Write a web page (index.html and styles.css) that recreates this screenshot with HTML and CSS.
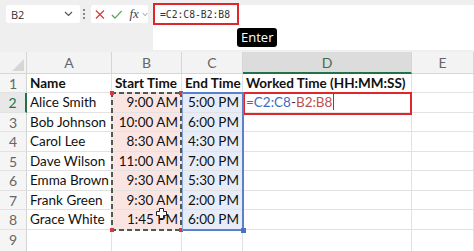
FILE: index.html
```html
<!DOCTYPE html>
<html>

<head>
    <meta charset="UTF-8">
    <title>Worked Time</title>
    <link rel="stylesheet" href="styles.css">
</head>

<body>
    <div class="topbar">
        <div class="namebox">
            <span>B2</span>
            <svg class="chev" width="9" height="6" viewBox="0 0 9 6"><polyline points="1,1 4.5,4.5 8,1" fill="none" stroke="#555" stroke-width="1.2"/></svg>
        </div>
        <div class="dots"><i></i><i></i><i></i></div>
        <div class="fxbox">
            <svg width="11" height="11" viewBox="0 0 11 11"><path d="M1 1 L10 10 M10 1 L1 10" stroke="#d13b3b" stroke-width="1.3" fill="none"/></svg>
            <svg width="13" height="11" viewBox="0 0 13 11"><polyline points="1,6 4.5,9.5 12,1.5" fill="none" stroke="#5aa55a" stroke-width="1.4"/></svg>
            <span class="fx">fx</span>
            <svg class="chev-s" width="7" height="5" viewBox="0 0 7 5"><polyline points="1,1 3.5,3.8 6,1" fill="none" stroke="#888" stroke-width="1"/></svg>
        </div>
        <div class="formula">
            <div class="formula-text">=C2:C8-B2:B8</div>
            <div class="tip">Enter</div>
        </div>
    </div>

    <div class="sheet">
        <div class="grid">
            <div class="corner"><svg width="12" height="12" viewBox="0 0 12 12"><polygon points="12,0 12,12 0,12" fill="#d6d6d6"/></svg></div>
            <div class="hd">A</div>
            <div class="hd">B</div>
            <div class="hd">C</div>
            <div class="hd sel">D</div>
            <div class="hd">E</div>

            <div class="rn">1</div>
            <div class="c bold">Name</div>
            <div class="c bold">Start Time</div>
            <div class="c bold">End Time</div>
            <div class="c bold">Worked Time (HH:MM:SS)</div>
            <div class="c"></div>

            <div class="rn sel">2</div>
            <div class="c">Alice Smith</div>
            <div class="c num pink">9:00 AM</div>
            <div class="c num blue">5:00 PM</div>
            <div class="c edit-text"><span class="ref-c">=C2:C8</span>-<span class="ref-b">B2:B8</span><span class="caret"></span></div>
            <div class="c"></div>

            <div class="rn">3</div>
            <div class="c">Bob Johnson</div>
            <div class="c num pink">10:00 AM</div>
            <div class="c num blue">6:00 PM</div>
            <div class="c"></div>
            <div class="c"></div>

            <div class="rn">4</div>
            <div class="c">Carol Lee</div>
            <div class="c num pink">8:30 AM</div>
            <div class="c num blue">4:30 PM</div>
            <div class="c"></div>
            <div class="c"></div>

            <div class="rn">5</div>
            <div class="c">Dave Wilson</div>
            <div class="c num pink">11:00 AM</div>
            <div class="c num blue">7:00 PM</div>
            <div class="c"></div>
            <div class="c"></div>

            <div class="rn">6</div>
            <div class="c">Emma Brown</div>
            <div class="c num pink">9:30 AM</div>
            <div class="c num blue">5:30 PM</div>
            <div class="c"></div>
            <div class="c"></div>

            <div class="rn">7</div>
            <div class="c">Frank Green</div>
            <div class="c num pink">9:30 AM</div>
            <div class="c num blue">2:00 PM</div>
            <div class="c"></div>
            <div class="c"></div>

            <div class="rn">8</div>
            <div class="c">Grace White</div>
            <div class="c num pink">1:45 PM</div>
            <div class="c num blue">6:00 PM</div>
            <div class="c"></div>
            <div class="c"></div>

            <div class="rn">9</div>
            <div class="c"></div>
            <div class="c"></div>
            <div class="c"></div>
            <div class="c"></div>
            <div class="c"></div>
        </div>

        <div class="overlay">
            <div class="range-b">
                <i class="sq tl"></i><i class="sq tr"></i><i class="sq bl"></i><i class="sq br"></i>
            </div>
            <div class="range-c"><i class="handle"></i></div>
            <div class="edit-box"></div>
        </div>

        <svg class="cursor" width="11" height="11" viewBox="0 0 11 11">
            <path d="M3.5 0.5 H7.5 V3.5 H10.5 V7.5 H7.5 V10.5 H3.5 V7.5 H0.5 V3.5 H3.5 Z" fill="#fff" stroke="#222" stroke-width="1"/>
        </svg>
    </div>
</body>

</html>
```

FILE: styles.css
```css
body {
    margin: 0;
    width: 474px;
    height: 251px;
    overflow: hidden;
    background: #fff;
    font-family: Lato, "Open Sans", sans-serif;
}

/* formula bar */

.topbar {
    display: flex;
    align-items: flex-start;
    height: 52px;
    box-sizing: border-box;
    padding: 5px 0 0 6px;
    background: #efefef;
}

.namebox {
    display: flex;
    align-items: center;
    justify-content: space-between;
    width: 74px;
    height: 18px;
    box-sizing: border-box;
    padding: 0 7px 0 5px;
    background: #fff;
    border-radius: 2px;
    font-family: "Open Sans", sans-serif;
    font-size: 11px;
    color: #333;
}

.dots {
    display: flex;
    flex-direction: column;
    gap: 2px;
    width: 11px;
    padding: 4px 0 0 3px;
    box-sizing: border-box;
}

.dots i {
    width: 2px;
    height: 2px;
    background: #666;
    border-radius: 1px;
}

.fxbox {
    display: flex;
    align-items: center;
    gap: 6px;
    width: 57px;
    height: 18px;
    box-sizing: border-box;
    padding-left: 4px;
    background: #fff;
    border-radius: 2px;
}

.fx {
    font-family: "Liberation Serif", serif;
    font-style: italic;
    font-size: 13px;
    color: #444;
    margin-left: 1px;
}

.chev-s {
    margin-left: -3px;
}

.formula {
    position: relative;
    flex: 1;
    height: 45px;
    margin-left: 5px;
    background: #fff;
}

.formula-text {
    width: 86px;
    height: 22px;
    box-sizing: border-box;
    margin-top: -2px;
    padding: 4px 0 0 5px;
    border: 2px solid #e1262b;
    font-family: "DejaVu Sans Mono", monospace;
    font-size: 9.7px;
    color: #333;
}

.tip {
    position: absolute;
    left: 84px;
    top: 23px;
    padding: 1px 4px 2px;
    background: #000;
    border-radius: 3px;
    font-family: "Open Sans", sans-serif;
    font-size: 13px;
    line-height: 16px;
    color: #fff;
}

/* sheet */

.sheet {
    position: relative;
}

.grid,
.overlay {
    display: grid;
    grid-template-columns: 27px 85px 70px 61px 169px 1fr;
    grid-template-rows: 22px 19px repeat(7, 19.57px) 22px;
}

.overlay {
    position: absolute;
    inset: 0;
}

.grid > div {
    box-sizing: border-box;
    border-right: 1px solid #e2e2e2;
    border-bottom: 1px solid #e2e2e2;
}

.corner {
    display: flex;
    align-items: flex-end;
    justify-content: flex-end;
    padding: 0 2px 2px 0;
    background: #f3f3f3;
}

.grid > .corner,
.grid > .hd {
    border-color: #d6d6d6;
}

.hd {
    background: #f3f3f3;
    text-align: center;
    font-size: 14px;
    line-height: 21px;
    color: #666;
}

.hd.sel {
    background: #dcdcdc;
    color: #3f6e50;
    border-bottom: 2px solid #217346;
}

.rn {
    background: #f5f5f5;
    text-align: center;
    font-size: 14px;
    line-height: 19px;
    color: #666;
}

.grid > .rn {
    border-right-color: #d4d4d4;
}

.grid > .rn.sel {
    color: #217346;
    border-right: 2px solid #217346;
    background: #e8e8e8;
}

.c {
    padding: 0 3px;
    font-size: 13.5px;
    line-height: 19px;
    color: #111;
    white-space: nowrap;
    overflow: hidden;
}

.bold {
    font-weight: bold;
}

.num {
    text-align: right;
}

.pink {
    background: #fbe5e3;
}

.blue {
    background: #e7edf8;
}

.edit-text {
    color: #333;
}

.ref-c {
    color: #3d6cc0;
}

.ref-b {
    color: #c0504d;
}

.caret {
    display: inline-block;
    width: 1px;
    height: 16px;
    margin-left: 1px;
    vertical-align: -3px;
    background: #555;
}

/* reference highlights */

.range-b {
    position: relative;
    grid-column: 3;
    grid-row: 3 / 10;
    margin: -1px 0 -1px -1px;
    background:
        repeating-linear-gradient(90deg, #4d5a4d 0 5px, transparent 5px 8px) top / 100% 2px no-repeat,
        repeating-linear-gradient(90deg, #4d5a4d 0 5px, transparent 5px 8px) bottom / 100% 2px no-repeat,
        repeating-linear-gradient(180deg, #4d5a4d 0 5px, transparent 5px 8px) left / 2px 100% no-repeat,
        repeating-linear-gradient(180deg, #4d5a4d 0 5px, transparent 5px 8px) right / 2px 100% no-repeat;
}

.sq {
    position: absolute;
    width: 4px;
    height: 4px;
    background: #d9383c;
}

.tl { left: -1px; top: -1px; }
.tr { right: -1px; top: -1px; }
.bl { left: -1px; bottom: -1px; }
.br { right: -1px; bottom: -1px; }

.range-c {
    position: relative;
    grid-column: 4;
    grid-row: 3 / 10;
    margin: -1px -1px -1px 0;
    border: 2px solid #5a82c8;
    border-left: 1px solid #8aa6dc;
}

.handle {
    position: absolute;
    right: -4px;
    bottom: -4px;
    width: 5px;
    height: 5px;
    background: #4a72c0;
}

.edit-box {
    grid-column: 5;
    grid-row: 3;
    margin: -1px 0 -2px 0;
    border: 2px solid #e1262b;
}

.cursor {
    position: absolute;
    left: 156px;
    top: 156px;
}
```
